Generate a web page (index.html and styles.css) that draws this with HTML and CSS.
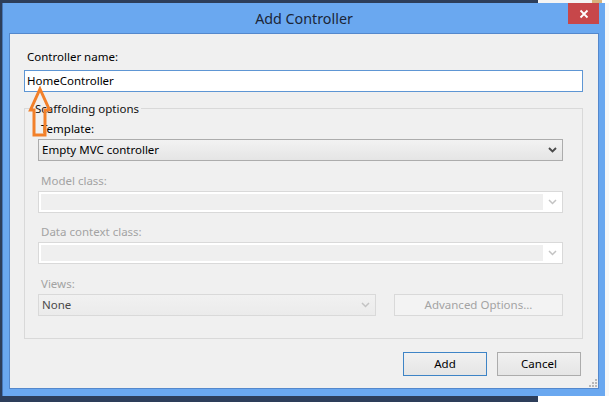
FILE: index.html
```html
<!DOCTYPE html>
<html lang="en">
<head>
<meta charset="utf-8">
<title>Add Controller</title>
<link rel="stylesheet" href="styles.css">
</head>
<body>
<div class="screen">
  <div class="strip strip-top">
    <span class="seg seg-dark"></span>
    <span class="seg seg-white"></span>
    <span class="seg seg-tan"></span>
    <span class="seg seg-light"></span>
  </div>
  <div class="middle">
    <div class="edge-left"></div>
    <div class="window">
      <div class="titlebar">
        <span class="tb-spacer"></span>
        <h1 class="title">Add Controller</h1>
        <button class="close" type="button" aria-label="Close">
          <svg width="10" height="10" viewBox="0 0 10 10"><path d="M1.5 1.5 L8.5 8.5 M8.5 1.5 L1.5 8.5" stroke="#fff" stroke-width="1.8" fill="none"/></svg>
        </button>
      </div>
      <div class="client">
        <div class="lbl lbl-name">Controller name:</div>
        <div class="textbox">HomeController</div>
        <fieldset class="group">
          <legend class="legend">Scaffolding options</legend>
          <div class="field">
            <div class="lbl">Template:</div>
            <div class="combo combo-active">
              <span class="combo-text">Empty MVC controller</span>
              <span class="combo-arrow">
                <svg width="9" height="6" viewBox="0 0 9 6"><polyline points="1,1 4.5,4.5 8,1" stroke="#4a4a4a" stroke-width="1.9" fill="none"/></svg>
              </span>
            </div>
          </div>
          <div class="field field-gap">
            <div class="lbl lbl-disabled">Model class:</div>
            <div class="combo combo-disabled">
              <span class="combo-fill"></span>
              <span class="combo-arrow">
                <svg width="9" height="6" viewBox="0 0 9 6"><polyline points="1,1 4.5,4.5 8,1" stroke="#c3c3c3" stroke-width="1.5" fill="none"/></svg>
              </span>
            </div>
          </div>
          <div class="field field-gap">
            <div class="lbl lbl-disabled">Data context class:</div>
            <div class="combo combo-disabled">
              <span class="combo-fill"></span>
              <span class="combo-arrow">
                <svg width="9" height="6" viewBox="0 0 9 6"><polyline points="1,1 4.5,4.5 8,1" stroke="#c3c3c3" stroke-width="1.5" fill="none"/></svg>
              </span>
            </div>
          </div>
          <div class="field field-gap">
            <div class="lbl lbl-disabled">Views:</div>
            <div class="views-row">
              <div class="combo combo-views">
                <span class="combo-text views-text">None</span>
                <span class="combo-arrow">
                  <svg width="9" height="6" viewBox="0 0 9 6"><polyline points="1,1 4.5,4.5 8,1" stroke="#c3c3c3" stroke-width="1.5" fill="none"/></svg>
                </span>
              </div>
              <button class="btn btn-disabled" type="button" disabled>Advanced Options...</button>
            </div>
          </div>
        </fieldset>
        <div class="buttons">
          <button class="btn btn-default" type="button">Add</button>
          <button class="btn" type="button">Cancel</button>
        </div>
        <svg class="grip" width="8" height="8" viewBox="0 0 8 8">
          <rect x="6" y="0" width="2" height="2" fill="#b8b8b8"/>
          <rect x="3" y="3" width="2" height="2" fill="#b8b8b8"/>
          <rect x="6" y="3" width="2" height="2" fill="#b8b8b8"/>
          <rect x="0" y="6" width="2" height="2" fill="#b8b8b8"/>
          <rect x="3" y="6" width="2" height="2" fill="#b8b8b8"/>
          <rect x="6" y="6" width="2" height="2" fill="#b8b8b8"/>
        </svg>
        <svg class="annot-arrow" width="24" height="52" viewBox="0 0 24 52">
          <polygon points="12,3 21.5,24 17,24 17,49 6,49 6,24 2.5,24" fill="none" stroke="#f2802a" stroke-width="3" stroke-linejoin="miter"/>
        </svg>
      </div>
    </div>
    <div class="edge-right"></div>
  </div>
  <div class="strip strip-bottom">
    <span class="seg seg-dark"></span>
    <span class="seg seg-light"></span>
  </div>
</div>
</body>
</html>
```

FILE: styles.css
```css
* { box-sizing: border-box; }

html, body {
  margin: 0;
  padding: 0;
}

body {
  width: 609px;
  height: 402px;
  overflow: hidden;
  background: #2d3e5a;
  font-family: "Noto Sans", "Open Sans", sans-serif;
  font-size: 11.5px;
  color: #000;
}

.screen {
  display: flex;
  flex-direction: column;
  width: 609px;
  height: 402px;
}

.strip {
  display: flex;
  flex: none;
}

.strip-top { height: 3px; }
.strip-bottom { height: 6px; }

.seg-dark { width: 538px; background: #2d3e5a; }
.seg-white { width: 54px; background: #f4f4f4; }
.seg-tan { width: 10px; background: #d8b37c; }
.seg-light { flex: 1; background: #ffffff; }

.middle {
  display: flex;
  height: 393px;
  flex: none;
}

.edge-left {
  width: 2px;
  background: #2d3e5a;
}

.edge-right {
  flex: 1;
  background: #f8f8f8;
}

.window {
  width: 603px;
  display: flex;
  flex-direction: column;
  background: #6aa8f0;
  border-left: 1px solid #4777b8;
  padding: 0 6px 7px 6px;
}

.titlebar {
  height: 30px;
  flex: none;
  display: grid;
  grid-template-columns: 1fr auto 1fr;
  align-items: start;
}

.title {
  margin: 0;
  font-family: "Noto Sans", "Open Sans", sans-serif;
  font-weight: normal;
  font-size: 14.3px;
  line-height: 31px;
  color: #1b2638;
}

.close {
  justify-self: end;
  width: 31px;
  height: 21px;
  margin: 0;
  padding: 0;
  border: none;
  background: #c7474a;
  display: flex;
  align-items: center;
  justify-content: center;
}

.client {
  flex: 1;
  position: relative;
  background: #f0f0f0;
  border: 1px solid #5488cc;
  padding: 15px 15px 0 14px;
}

.lbl {
  line-height: 15px;
  height: 15px;
  padding-left: 3px;
  white-space: nowrap;
}

.lbl-name {
  margin-bottom: 6px;
}

.lbl-disabled {
  color: #a3a3a3;
}

.textbox {
  height: 22px;
  border: 1px solid #5e96d4;
  background: #fff;
  padding-left: 2px;
  line-height: 20px;
}

.group {
  margin: 9px 0 0 0;
  min-width: 0;
  border: 1px solid #d9d9d9;
  padding: 5px 19px 22px 13px;
}

.legend {
  padding: 0 2px;
  margin-left: -5px;
  line-height: 15px;
  color: #111;
}

.field .lbl {
  margin-bottom: 3px;
}

.field-gap {
  margin-top: 11.5px;
}

.combo {
  height: 22px;
  display: flex;
  align-items: stretch;
}

.combo-active {
  border: 1px solid #acacac;
  background: linear-gradient(#f2f2f2, #e5e5e5);
}

.combo-text {
  flex: 1;
  padding-left: 3px;
  line-height: 20px;
  white-space: nowrap;
}

.combo-arrow {
  width: 20px;
  flex: none;
  display: flex;
  align-items: center;
  justify-content: center;
}

.combo-disabled {
  border: 1px solid #d9d9d9;
  background: #ffffff;
  padding: 2px 0 2px 2px;
}

.combo-fill {
  flex: 1;
  background: #efefef;
}

.combo-disabled .combo-arrow {
  width: 19px;
  margin-top: -2px;
  margin-bottom: -2px;
}

.views-row {
  display: flex;
}

.combo-views {
  width: 338px;
  border: 1px solid #d9d9d9;
  background: linear-gradient(#f1f1f1, #ebebeb);
}

.views-text {
  color: #4a4a4a;
}

.btn {
  font-family: "Noto Sans", "Open Sans", sans-serif;
  font-size: 11.5px;
  color: #000;
  height: 24px;
  width: 84px;
  margin: 0;
  padding: 0;
  border: 1px solid #acacac;
  background: linear-gradient(#f1f1f1, #e5e5e5);
}

.btn-default {
  border-color: #3e84c6;
}

.btn-disabled {
  flex: 1;
  width: auto;
  height: 22px;
  margin-left: 18px;
  border-color: #d9d9d9;
  background: #f3f3f3;
  color: #a3a3a3;
}

.buttons {
  display: flex;
  justify-content: flex-end;
  gap: 10px;
  margin-top: 13px;
  margin-right: 2px;
}

.grip {
  position: absolute;
  right: 1px;
  bottom: 1px;
}

.annot-arrow {
  position: absolute;
  left: 18px;
  top: 52px;
}
```
